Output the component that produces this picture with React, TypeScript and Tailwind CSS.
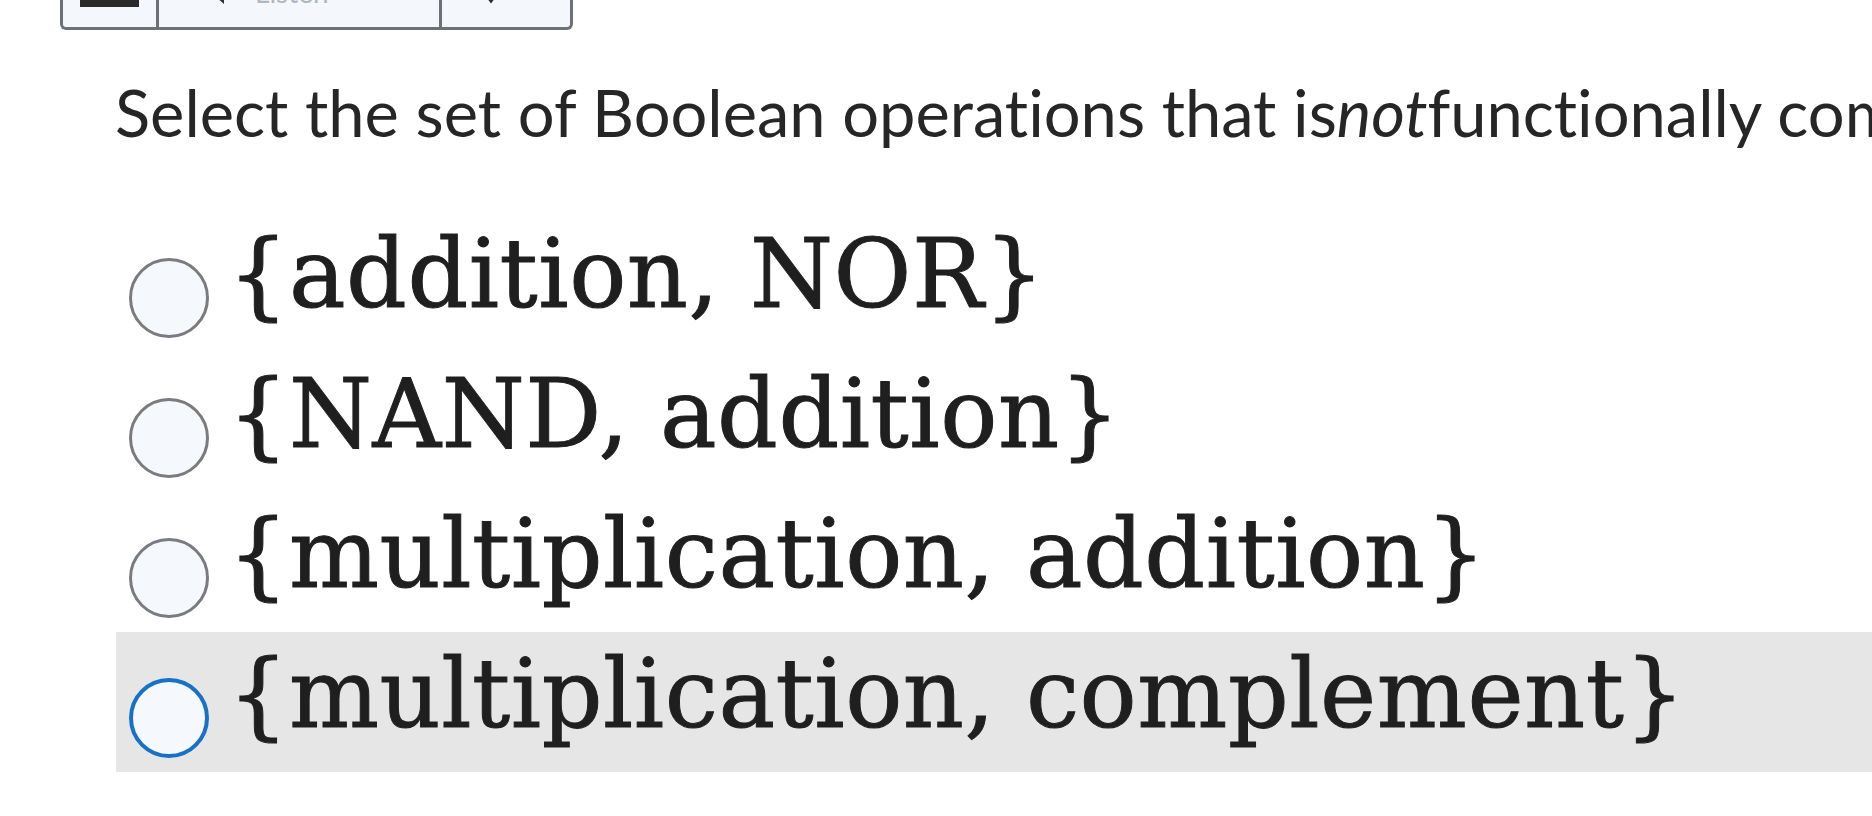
import React from 'react'

const options = [
  '{addition, NOR}',
  '{NAND, addition}',
  '{multiplication, addition}',
  '{multiplication, complement}',
]

function Toolbar() {
  return (
    <div className="ml-[60px] flex h-[30px] w-[513px] overflow-hidden rounded-b-[6px] border-x-[3px] border-b-[3px] border-[#6c7177] bg-[#f4f7fb]">
      {/* left cell: cut-off black button */}
      <div className="w-[96px] border-r-[3px] border-[#6c7177]">
        <div className="ml-[17px] h-[7px] w-[59px] bg-[#2a2a2a]" />
      </div>
      {/* middle cell: listen */}
      <div className="flex w-[283px] items-start border-r-[3px] border-[#6c7177]">
        <div className="-mt-[22px] ml-[48px] flex items-end gap-[14px]">
          <svg width="34" height="28" viewBox="0 0 34 28">
            <path d="M2 9 L9 9 L17 2 L17 26 L9 19 L2 19 Z" fill="#2f3033" />
            <path d="M22 8 Q27 14 22 20" stroke="#f0793a" strokeWidth="3" fill="none" />
          </svg>
          <span className="text-[28px] leading-[28px] text-[#b3b6ba]" style={{ fontFamily: 'Lato, sans-serif' }}>
            Listen
          </span>
        </div>
      </div>
      {/* right cell: chevron */}
      <div className="flex flex-1 items-start">
        <svg className="-mt-[10px] ml-[41px]" width="16" height="14" viewBox="0 0 16 14">
          <path d="M2 3 L8 11 L14 3" stroke="#2f3033" strokeWidth="3" fill="none" />
        </svg>
      </div>
    </div>
  )
}

export default function App() {
  return (
    <div className="h-[816px] w-[1872px] overflow-hidden bg-white">
      <Toolbar />

      <p
        className="ml-[115px] mt-[50px] whitespace-nowrap text-[65px] leading-[65px] text-[#262626] [font-variant-ligatures:none]"
        style={{ fontFamily: 'Lato, sans-serif' }}
      >
        Select the set of Boolean operations that is<em>not</em>functionally complete.
      </p>

      <div className="ml-[116px] mt-[67px]">
        {options.map((opt, i) => {
          const active = i === options.length - 1
          return (
            <div
              key={opt}
              className={`flex h-[140px] items-start pl-[13px] ${active ? 'bg-[#e6e6e6]' : ''}`}
            >
              <span
                className={`mt-[46px] block h-[80px] w-[80px] shrink-0 rounded-full bg-[#f5f8fc] ${
                  active ? 'border-[4px] border-[#1771c7]' : 'border-[3px] border-[#7a7a80]'
                }`}
              />
              <span
                className="ml-[19px] whitespace-nowrap pt-[7px] text-[95px] leading-[111px] tracking-[0.5px] text-[#1f1f1f] [-webkit-text-stroke:1px_#1f1f1f]"
                style={{ fontFamily: '"DejaVu Serif", serif' }}
              >
                {opt}
              </span>
            </div>
          )
        })}
      </div>
    </div>
  )
}
